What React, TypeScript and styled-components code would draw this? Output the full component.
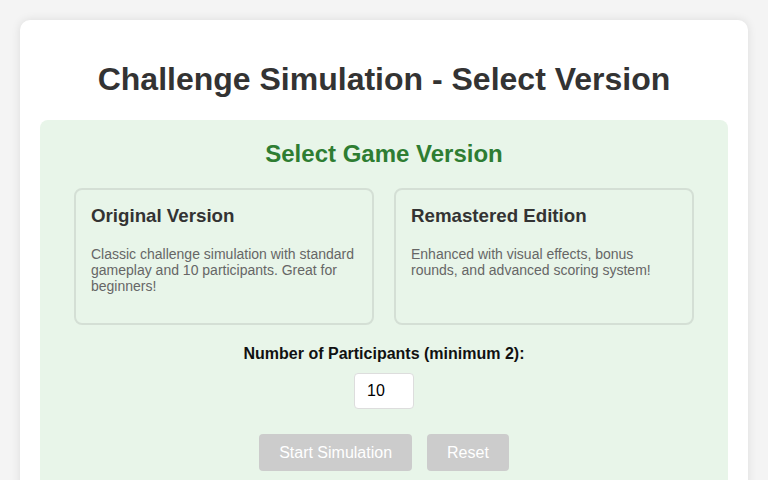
import React, { useState } from "react";
import styled, { createGlobalStyle } from "styled-components";

const Global = createGlobalStyle`
  html, body { margin: 0; padding: 0; }
  body {
    background: #f4f4f4;
    font-family: "Liberation Sans", Arial, sans-serif;
    padding: 20px;
  }
`;

const Card = styled.div`
  background: #fff;
  border-radius: 10px;
  box-shadow: 0 0 10px rgba(0, 0, 0, 0.1);
  padding: 20px;
`;

const Title = styled.h1`
  margin: 21px 0 22px;
  font-size: 32px;
  font-weight: bold;
  color: #333;
  text-align: center;
`;

const Panel = styled.div`
  background: #e8f5e9;
  border-radius: 8px;
  padding: 20px;
  text-align: center;
`;

const PanelTitle = styled.h2`
  margin: 0 0 20px;
  font-size: 24px;
  color: #2e7d32;
`;

const Options = styled.div`
  display: flex;
  justify-content: center;
  gap: 20px;
`;

const Option = styled.div`
  width: 300px;
  box-sizing: border-box;
  border: 2px solid #d4dfd5;
  border-radius: 8px;
  padding: 15px;
  text-align: left;
  cursor: pointer;
`;

const OptionTitle = styled.h3`
  margin: 0 0 19px;
  font-size: 18.72px;
  line-height: 22px;
  color: #333;
`;

const OptionText = styled.p`
  margin: 0 0 14px;
  font-size: 14px;
  color: #666;
`;

const Label = styled.label`
  display: block;
  margin-top: 20px;
  font-size: 16px;
  font-weight: bold;
  color: #111;
`;

const NumberInput = styled.input`
  display: block;
  margin: 10px auto 0;
  width: 60px;
  height: 36px;
  box-sizing: border-box;
  padding: 0 12px;
  border: 1px solid #ddd;
  border-radius: 4px;
  font-family: "Liberation Sans", Arial, sans-serif;
  font-size: 16px;
  color: #000;
  background: #fff;
  -moz-appearance: textfield;
  &::-webkit-inner-spin-button,
  &::-webkit-outer-spin-button { -webkit-appearance: none; margin: 0; }
`;

const Buttons = styled.div`
  display: flex;
  justify-content: center;
  gap: 15px;
  margin-top: 25px;
`;

const Button = styled.button`
  height: 37px;
  padding: 0 20px;
  border: none;
  border-radius: 4px;
  background: #cccccc;
  color: #fff;
  font-family: "Liberation Sans", Arial, sans-serif;
  font-size: 16px;
  cursor: not-allowed;
`;

export default function App() {
  const [count, setCount] = useState("10");
  return (
    <>
      <Global />
      <Card>
        <Title>Challenge Simulation - Select Version</Title>
        <Panel>
          <PanelTitle>Select Game Version</PanelTitle>
          <Options>
            <Option>
              <OptionTitle>Original Version</OptionTitle>
              <OptionText>
                Classic challenge simulation with standard gameplay and 10 participants. Great for beginners!
              </OptionText>
            </Option>
            <Option>
              <OptionTitle>Remastered Edition</OptionTitle>
              <OptionText>
                Enhanced with visual effects, bonus rounds, and advanced scoring system!
              </OptionText>
            </Option>
          </Options>
          <Label htmlFor="participants">Number of Participants (minimum 2):</Label>
          <NumberInput
            id="participants"
            type="number"
            min={2}
            value={count}
            onChange={(e) => setCount(e.target.value)}
          />
          <Buttons>
            <Button disabled>Start Simulation</Button>
            <Button disabled>Reset</Button>
          </Buttons>
        </Panel>
      </Card>
    </>
  );
}
